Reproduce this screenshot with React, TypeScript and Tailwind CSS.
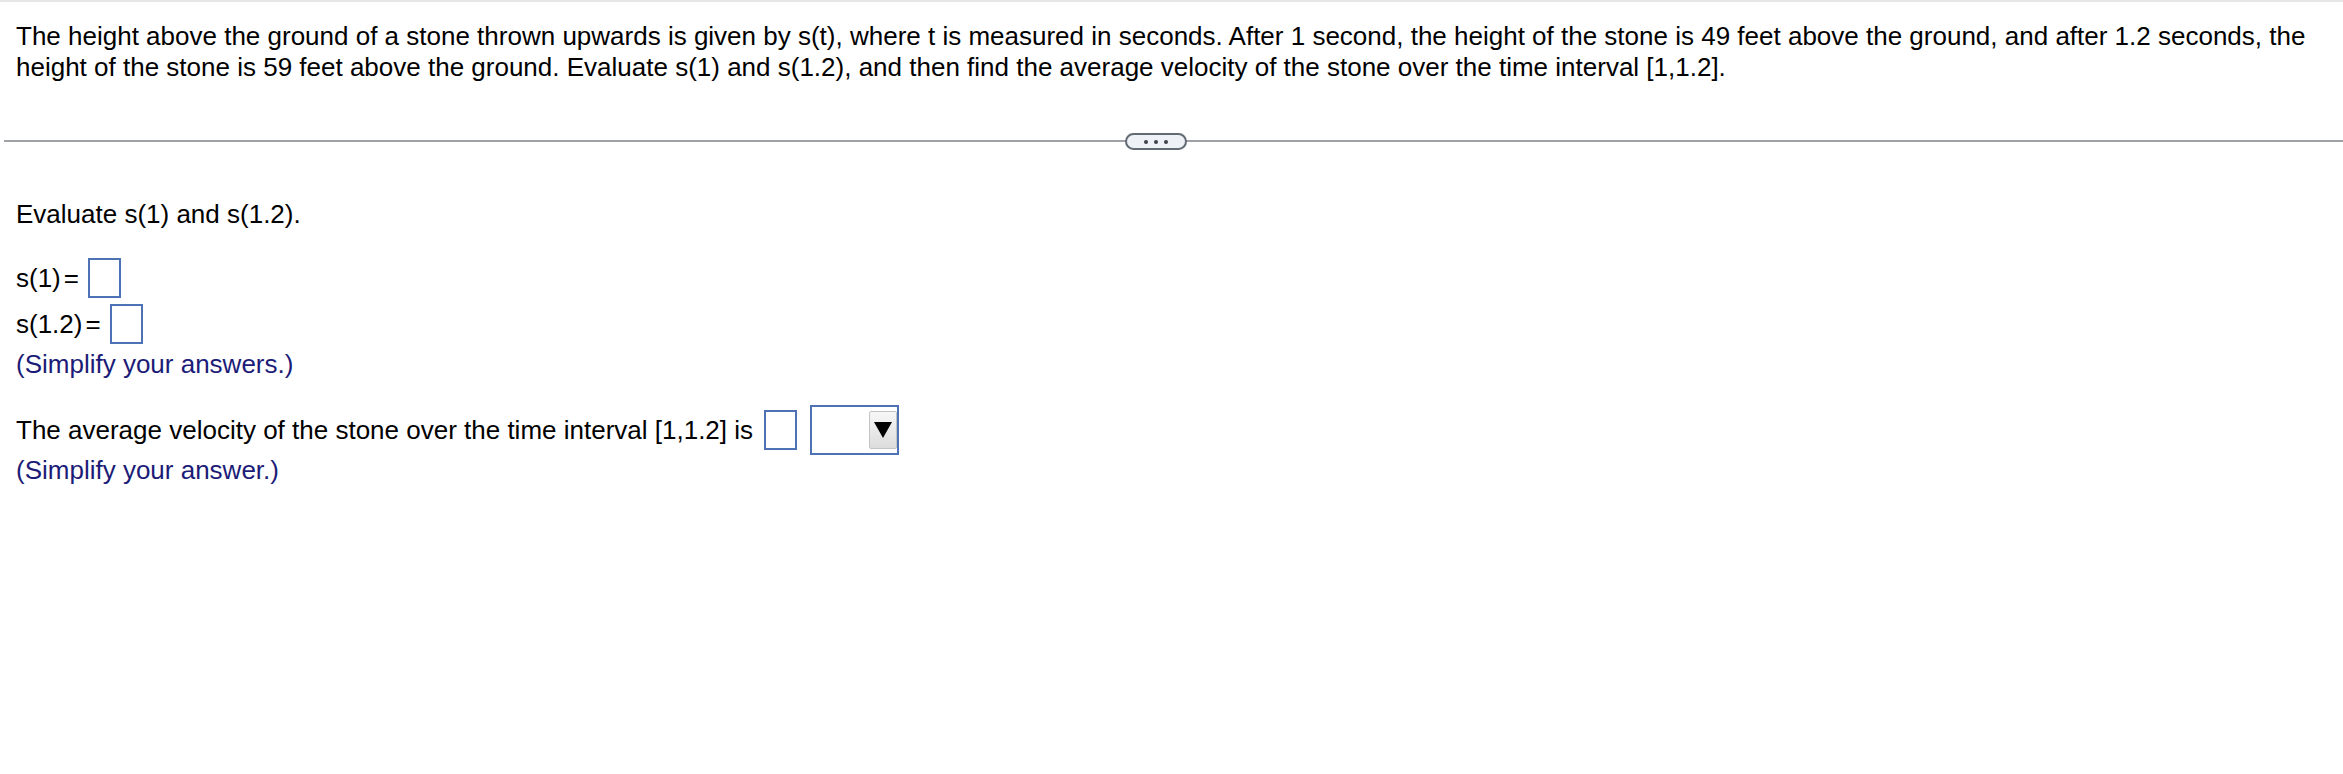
import React from "react";

function AnswerBox({ className = "" }: { className?: string }) {
  return <span className={`inline-block w-[33px] h-[40px] border-2 border-[#4d72b6] bg-white ${className}`} />;
}

function UnitSelect() {
  return (
    <div className="ml-[13px] w-[89px] h-[50px] border-2 border-[#4d72b6] bg-white flex justify-end items-center">
      <div className="w-[28px] h-[38px] border border-[#c4c4c4] rounded-[2px] bg-gradient-to-b from-[#f7f7f7] to-[#dcdcdc] flex items-center justify-center">
        <svg width="20" height="18" viewBox="0 0 20 18">
          <polygon points="1,1 19,1 10,17" fill="#000" />
        </svg>
      </div>
    </div>
  );
}

export default function App() {
  return (
    <div className="min-h-screen bg-white text-black border-t-2 border-[#e6e6e6] font-['Liberation_Sans',Arial,sans-serif]">
      <p className="pl-[16px] pr-[16px] pt-[19px] text-[26px] leading-[31px]">
        The height above the ground of a stone thrown upwards is given by s(t), where t is measured in seconds. After 1 second, the height of the stone is 49 feet above the ground, and after 1.2 seconds, the height of the stone is 59 feet above the ground. Evaluate s(1) and s(1.2), and then find the average velocity of the stone over the time interval [1,1.2].
      </p>

      <div className="relative mt-[57px] ml-[4px] h-[2px] bg-[#9ea1a6]">
        <button className="absolute left-[1121px] top-[-7px] w-[62px] h-[17px] rounded-full border-2 border-[#626a74] bg-[#eef1f5] flex items-center justify-center gap-[6px]">
          <span className="w-[4px] h-[4px] rounded-full bg-[#3d434b]" />
          <span className="w-[4px] h-[4px] rounded-full bg-[#3d434b]" />
          <span className="w-[4px] h-[4px] rounded-full bg-[#3d434b]" />
        </button>
      </div>

      <div className="pl-[16px] text-[26px] leading-[30px]">
        <p className="mt-[57px]">Evaluate s(1) and s(1.2).</p>

        <div className="mt-[29px] flex items-center">
          <span>s(1)</span>
          <span className="ml-[3px]">=</span>
          <AnswerBox className="ml-[9px]" />
        </div>
        <div className="mt-[6px] flex items-center">
          <span>s(1.2)</span>
          <span className="ml-[3px]">=</span>
          <AnswerBox className="ml-[9px]" />
        </div>
        <p className="mt-[5px] text-[#1c1c78]">(Simplify your answers.)</p>

        <div className="mt-[26px] flex items-center">
          <span>The average velocity of the stone over the time interval [1,1.2] is</span>
          <AnswerBox className="ml-[11px]" />
          <UnitSelect />
        </div>
        <p className="text-[#1c1c78]">(Simplify your answer.)</p>
      </div>
    </div>
  );
}
